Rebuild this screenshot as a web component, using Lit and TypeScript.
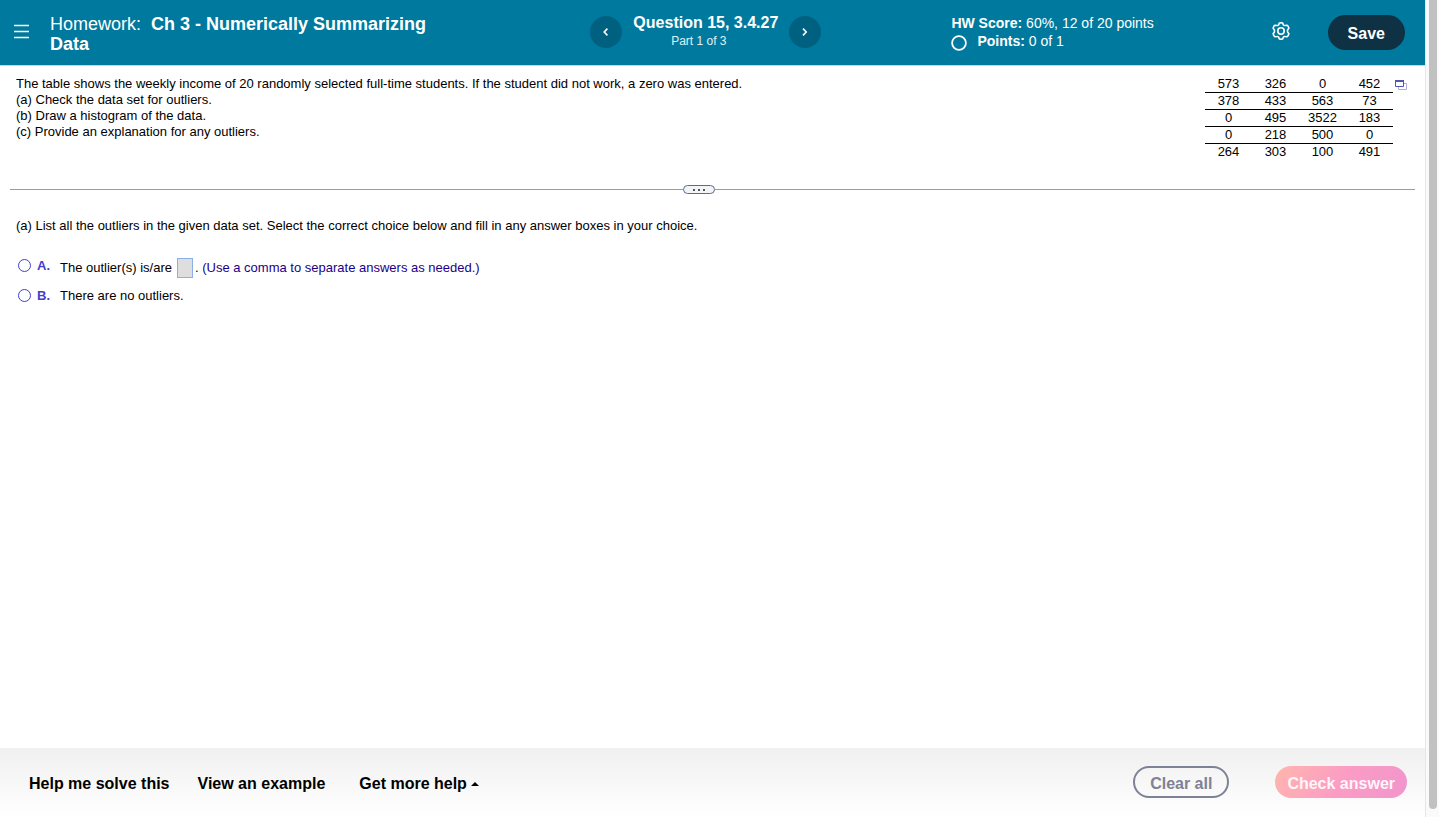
import { LitElement, html, css } from "lit";
import { customElement, state } from "lit/decorators.js";

const INCOMES = [
  [573, 326, 0, 452],
  [378, 433, 563, 73],
  [0, 495, 3522, 183],
  [0, 218, 500, 0],
  [264, 303, 100, 491],
];

const resets = css`
  :host {
    font-family: "Liberation Sans", Arial, Helvetica, sans-serif;
  }
  *,
  *::before,
  *::after {
    box-sizing: border-box;
  }
  button {
    font: inherit;
    color: inherit;
    margin: 0;
    padding: 0;
    border: 0;
    background: none;
    cursor: pointer;
  }
  svg {
    display: block;
  }
`;

@customElement("player-header")
class PlayerHeader extends LitElement {
  static styles = [
    resets,
    css`
      :host {
        display: block;
      }
      .bar {
        display: grid;
        grid-template-columns: auto minmax(0, 54fr) auto minmax(0, 13fr) minmax(0, 32fr) auto auto;
        align-items: start;
        min-height: 66px;
        padding-right: 20px;
        background: #00799e;
        border-bottom: 1px solid #c7d3e8;
        color: #fff;
      }
      .menu {
        width: 50px;
        padding: 24px 0 0 14px;
      }
      .title {
        max-width: 400px;
        margin: 0;
        padding-top: 14px;
        font-size: 18px;
        line-height: 20px;
        font-weight: 700;
      }
      .kind {
        font-weight: 400;
        margin-right: 5px;
      }
      .nav {
        display: grid;
        grid-template-columns: 32px auto 32px;
        align-items: center;
        gap: 11px;
        padding-top: 13px;
        text-align: center;
      }
      .step {
        display: grid;
        place-items: center;
        width: 32px;
        height: 32px;
        margin-top: 2px;
        border-radius: 50%;
        background: #006080;
      }
      .question {
        margin: 0;
        font-size: 16px;
        line-height: 20px;
        font-weight: 700;
      }
      .part {
        margin: 0;
        padding-right: 14px;
        font-size: 12px;
        line-height: 16px;
        color: #e0f0f5;
      }
      .score {
        grid-column: 5;
        padding-top: 14px;
        font-size: 14px;
        line-height: 18px;
        white-space: nowrap;
      }
      .score p {
        margin: 0;
      }
      .points {
        display: flex;
        gap: 10px;
      }
      .points svg {
        margin-top: 3px;
      }
      .gear {
        margin: 22px 38px 0 0;
      }
      .save {
        margin-top: 15px;
        padding: 2px 20px 0;
        height: 35px;
        border-radius: 18px;
        background: #0e3144;
        font-size: 16px;
        font-weight: 700;
      }
    `,
  ];

  render() {
    return html`
      <header class="bar">
        <button class="menu" aria-label="Menu">
          <svg width="16" height="15" viewBox="0 0 16 15" stroke="#fff" stroke-width="1.6">
            <path d="M0 1.5H15M0 7.5H15M0 13.5H15" />
          </svg>
        </button>
        <h1 class="title">
          <span class="kind">Homework:</span> Ch 3 - Numerically Summarizing Data
        </h1>
        <nav class="nav">
          <button class="step" aria-label="Previous question">
            <svg width="8" height="10" viewBox="0 0 8 10" fill="none" stroke="#fff" stroke-width="1.6">
              <path d="M5.4 1.6 2.2 5 5.4 8.4" />
            </svg>
          </button>
          <div>
            <h2 class="question">Question 15, 3.4.27</h2>
            <p class="part">Part 1 of 3</p>
          </div>
          <button class="step" aria-label="Next question">
            <svg width="8" height="10" viewBox="0 0 8 10" fill="none" stroke="#fff" stroke-width="1.6">
              <path d="M2 1.6 5.2 5 2 8.4" />
            </svg>
          </button>
        </nav>
        <div class="score">
          <p><b>HW Score:</b> 60%, 12 of 20 points</p>
          <p class="points">
            <svg width="16" height="16" viewBox="0 0 16 16" fill="none" stroke="#fff" stroke-width="1.8">
              <circle cx="8" cy="8" r="6.9" />
            </svg>
            <span><b>Points:</b> 0 of 1</span>
          </p>
        </div>
        <button class="gear" aria-label="Settings">
          <svg width="18" height="18" viewBox="0 0 18 18" fill="none" stroke="#fff" stroke-width="1.6" stroke-linejoin="round">
            <path
              d="M7.2 1.2Q9 .2 10.8 1.2L11.4 3Q12.200 3.700 13.200 3.500L15 3.200Q16.600 4.300 16.900 6.300L15.700 7.800Q15.300 9 15.700 10.200L16.900 11.700Q16.600 13.700 15 14.800L13.200 14.500Q12.200 14.300 11.400 15L10.800 16.800Q9 17.800 7.200 16.800L6.600 15Q5.800 14.300 4.800 14.500L3 14.800Q1.400 13.700 1.100 11.700L2.300 10.200Q2.700 9 2.300 7.800L1.100 6.300Q1.400 4.300 3 3.200L4.800 3.500Q5.800 3.700 6.600 3Z"
            />
            <circle cx="9" cy="9" r="3.2" />
          </svg>
        </button>
        <button class="save">Save</button>
      </header>
    `;
  }
}

@customElement("question-prompt")
class QuestionPrompt extends LitElement {
  static styles = [
    resets,
    css`
      :host {
        display: block;
        font-size: 13px;
        line-height: 16px;
      }
      .prompt {
        display: flex;
        justify-content: space-between;
        align-items: flex-start;
        gap: 32px;
        min-height: 119px;
        padding: 10px 18px 0 16px;
      }
      .prompt p {
        margin: 0;
      }
      .data {
        display: flex;
        align-items: flex-start;
        gap: 2px;
      }
      .incomes {
        border-collapse: collapse;
      }
      .incomes td {
        width: 47px;
        padding: 0;
        line-height: 16px;
        text-align: center;
      }
      .incomes tr + tr td {
        border-top: 1px solid #000;
      }
      .copy {
        margin-top: 4px;
      }
      .divider {
        display: grid;
        grid-template-columns: 49fr auto 51fr;
        align-items: center;
        margin: 0 10px;
      }
      .line {
        height: 1px;
        background: #bb8c9a;
      }
      .handle {
        display: flex;
        justify-content: center;
        align-items: center;
        gap: 3px;
        width: 32px;
        height: 9px;
        border: 1px solid #5d6d88;
        border-radius: 5px;
        background: #f2f5f7;
      }
      .dot {
        width: 2px;
        height: 2px;
        background: #555;
      }
    `,
  ];

  render() {
    return html`
      <section class="prompt">
        <div>
          <p>
            The table shows the weekly income of 20 randomly selected full-time students. If the
            student did not work, a zero was entered.
          </p>
          <p>(a) Check the data set for outliers.</p>
          <p>(b) Draw a histogram of the data.</p>
          <p>(c) Provide an explanation for any outliers.</p>
        </div>
        <div class="data">
          <table class="incomes">
            <tbody>
              ${INCOMES.map(
                (row) => html`<tr>
                  ${row.map((value) => html`<td>${value}</td>`)}
                </tr>`
              )}
            </tbody>
          </table>
          <button class="copy" aria-label="Open data">
            <svg width="12" height="10" viewBox="0 0 12 10" fill="none">
              <path d="M3.500 7V9.500H11.500V3.500H9" stroke="#a9aedd" />
              <path d="M.5 .5H8.500V6.500H.5Z" stroke="#5055b0" />
              <path d="M0 1H9" stroke="#5055b0" stroke-width="2" />
            </svg>
          </button>
        </div>
      </section>
      <div class="divider">
        <span class="line"></span>
        <button class="handle" aria-label="Resize panes">
          <span class="dot"></span><span class="dot"></span><span class="dot"></span>
        </button>
        <span class="line"></span>
      </div>
    `;
  }
}

@customElement("answer-choices")
class AnswerChoices extends LitElement {
  @state() private choice = "";

  static styles = [
    resets,
    css`
      :host {
        display: block;
        padding: 24px 16px;
        font-size: 13px;
        line-height: 16px;
      }
      .lead {
        margin: 0 0 24px;
      }
      .choice {
        display: grid;
        grid-template-columns: 21px 23px auto;
        justify-content: start;
        align-items: start;
        margin-bottom: 10px;
      }
      .radio {
        appearance: none;
        width: 13px;
        height: 13px;
        margin: 1px 0 0 2px;
        border: 1px solid #3b3fd8;
        border-radius: 50%;
        background: #fff;
      }
      .radio:checked {
        background: #3b3fd8;
        box-shadow: inset 0 0 0 2px #fff;
      }
      .letter {
        font-weight: 700;
        color: #4040d0;
      }
      .fill {
        display: flex;
        align-items: center;
        white-space: pre;
      }
      .blank {
        width: 16px;
        height: 20px;
        margin: 0 2px 0 5px;
        padding: 0;
        border: 1px solid #8eaeea;
        border-radius: 0;
        background: #dedede;
        font: inherit;
      }
      .hint {
        color: #1c0087;
      }
    `,
  ];

  private pick(letter: string) {
    this.choice = letter;
  }

  render() {
    return html`
      <p class="lead">
        (a) List all the outliers in the given data set. Select the correct choice below and fill in
        any answer boxes in your choice.
      </p>
      <div class="choice">
        <input class="radio" id="a" type="radio" name="choice" .checked=${this.choice === "A"} @change=${() => this.pick("A")} />
        <label class="letter" for="a">A.</label>
        <div class="fill"><label for="outliers">The outlier(s) is/are</label><input class="blank" id="outliers" type="text" /><span>. </span><span class="hint">(Use a comma to separate answers as needed.)</span></div>
      </div>
      <div class="choice">
        <input class="radio" id="b" type="radio" name="choice" .checked=${this.choice === "B"} @change=${() => this.pick("B")} />
        <label class="letter" for="b">B.</label>
        <label for="b">There are no outliers.</label>
      </div>
    `;
  }
}

@customElement("player-footer")
class PlayerFooter extends LitElement {
  static styles = [
    resets,
    css`
      :host {
        display: block;
      }
      .bar {
        display: flex;
        align-items: flex-start;
        min-height: 69px;
        padding: 18px 18px 0 29px;
        background: linear-gradient(#f0f0f0, #fff);
        font-size: 16px;
        line-height: 20px;
        font-weight: 700;
      }
      .help {
        display: flex;
        gap: 28px;
        padding-top: 8px;
        margin-right: auto;
      }
      .more {
        display: flex;
        align-items: center;
        gap: 4px;
        padding-left: 6px;
      }
      .actions {
        display: flex;
        gap: 46px;
      }
      .clear,
      .check {
        height: 32px;
        border-radius: 16px;
      }
      .clear {
        padding: 3px 15px 0;
        border: 2px solid #7d8296;
        color: #7d8296;
      }
      .check {
        padding: 3px 12px 0;
        background: linear-gradient(120deg, #ffb6ad, #fc9cc4 50%, #f095cd);
        color: #fff5fa;
      }
    `,
  ];

  render() {
    return html`
      <footer class="bar">
        <div class="help">
          <button>Help me solve this</button>
          <button>View an example</button>
          <button class="more">
            Get more help
            <svg width="8" height="4" viewBox="0 0 8 4"><path d="M0 4 4 0 8 4Z" /></svg>
          </button>
        </div>
        <div class="actions">
          <button class="clear">Clear all</button>
          <button class="check">Check answer</button>
        </div>
      </footer>
    `;
  }
}

@customElement("app-root")
class AppRoot extends LitElement {
  static styles = [
    resets,
    css`
      :host {
        display: grid;
        grid-template-columns: minmax(0, 1fr) 14px;
        height: 100vh;
        background: #fff;
        color: #000;
      }
      .page {
        display: flex;
        flex-direction: column;
        min-height: 0;
      }
      .work {
        flex: 1;
        min-height: 0;
        overflow: hidden;
      }
      .track {
        display: flex;
        padding: 0 2px 8px 3px;
        border-left: 1px solid #e6e6e6;
        background: #fafafa;
      }
      .thumb {
        flex: 1;
        border-radius: 0 0 4px 4px;
        background: #c1c1c1;
      }
    `,
  ];

  render() {
    return html`
      <div class="page">
        <player-header></player-header>
        <main class="work">
          <question-prompt></question-prompt>
          <answer-choices></answer-choices>
        </main>
        <player-footer></player-footer>
      </div>
      <div class="track"><div class="thumb"></div></div>
    `;
  }
}
